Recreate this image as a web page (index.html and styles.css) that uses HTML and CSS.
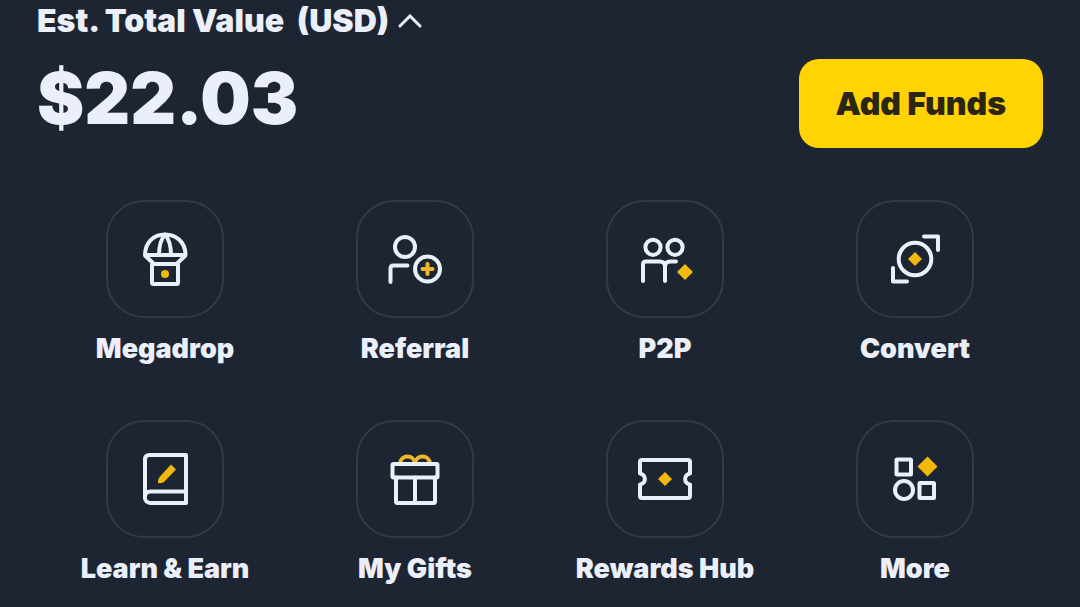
FILE: index.html
```html
<!DOCTYPE html>
<html lang="en">
<head>
  <meta charset="UTF-8" />
  <meta name="viewport" content="width=device-width, initial-scale=1.0" />
  <title>Wallet</title>
  <link rel="stylesheet" href="styles.css">
</head>
<body>
  <header class="balance">
    <div class="balance-info">
      <button class="total-toggle" type="button" aria-expanded="true">
        <span>Est. Total Value&nbsp; (USD)</span>
        <svg class="chevron" viewBox="0 0 24 14" aria-hidden="true"><path d="M2 12 12 2l10 10" /></svg>
      </button>
      <div class="amount">$22.03</div>
    </div>
    <button class="add-funds" type="button">Add Funds</button>
  </header>

  <nav class="shortcuts">
    <a class="shortcut" href="#megadrop">
      <span class="tile">
        <svg class="icon" viewBox="0 0 64 64" aria-hidden="true">
          <path d="M12 28C12 15.500 20.500 7.500 32 7.500S52.500 15.500 52.500 28Z" />
          <path d="M26 28c0-9 2-16 6-20.500 4 4.500 6 11.500 6 20.500M12.500 29l8 7.500M52 29l-8 7.500" />
          <rect x="19" y="37" width="26" height="20" rx="1.500" />
          <circle class="gold" cx="32" cy="47" r="4" />
        </svg>
      </span>
      <span class="label">Megadrop</span>
    </a>
    <a class="shortcut" href="#referral">
      <span class="tile">
        <svg class="icon" viewBox="0 0 64 64" aria-hidden="true">
          <circle cx="22" cy="20" r="10" />
          <path d="M7.500 55V41.500q0-3 3-3h14" />
          <circle cx="44.500" cy="42" r="12.500" />
          <path class="gold-line" d="M44.500 37v10M39.500 42h10" />
        </svg>
      </span>
      <span class="label">Referral</span>
    </a>
    <a class="shortcut" href="#p2p">
      <span class="tile">
        <svg class="icon" viewBox="0 0 64 64" aria-hidden="true">
          <circle cx="20" cy="20.300" r="7.600" />
          <circle cx="42" cy="20.300" r="7.600" />
          <path d="M10 54V37.500q0-3 3-3h13.500q5.500 0 5.500 5V54M32 39.500q0-5 5.500-5H43" />
          <path class="gold" d="m52 37 8 8-8 8-8-8z" />
        </svg>
      </span>
      <span class="label">P2P</span>
    </a>
    <a class="shortcut" href="#convert">
      <span class="tile">
        <svg class="icon" viewBox="0 0 64 64" aria-hidden="true">
          <circle cx="32" cy="32" r="16.300" />
          <path d="M41 9.500h14V23M10 41v13.500h14" />
          <path class="gold" d="m32 25 7 7-7 7-7-7z" />
        </svg>
      </span>
      <span class="label">Convert</span>
    </a>
    <a class="shortcut" href="#learn">
      <span class="tile">
        <svg class="icon" viewBox="0 0 64 64" aria-hidden="true">
          <path d="M12 50V12.500Q12 8 16.500 8H53v48H17.500c-7.500 0-7.500-11.500 0-11.500h35" />
          <path class="gold" d="m38 17.500 5 5-12 12.500q-2 1.500-6 1 0-4 1.500-6z" />
        </svg>
      </span>
      <span class="label">Learn &amp; Earn</span>
    </a>
    <a class="shortcut" href="#gifts">
      <span class="tile">
        <svg class="icon" viewBox="0 0 64 64" aria-hidden="true">
          <path class="gold-line" d="M17 16.500c1-9.500 14-9.500 15 0 1-9.500 14-9.500 15 0" />
          <rect x="9.500" y="17" width="45" height="13.500" rx="1" />
          <path d="M13 30.500v24q0 1.500 1.500 1.500h36q1.500 0 1.500-1.500v-24M32 30.500v25" />
        </svg>
      </span>
      <span class="label">My Gifts</span>
    </a>
    <a class="shortcut" href="#rewards">
      <span class="tile">
        <svg class="icon" viewBox="0 0 64 64" aria-hidden="true">
          <path d="M9 13h46q2 0 2 2v11.500c-6.500 1-6.500 10 0 11V49q0 2-2 2H9q-2 0-2-2V37.500c6.500-1 6.500-10 0-11V15q0-2 2-2z" />
          <path class="gold" d="m32 25 7 7-7 7-7-7z" />
        </svg>
      </span>
      <span class="label">Rewards Hub</span>
    </a>
    <a class="shortcut" href="#more">
      <span class="tile">
        <svg class="icon" viewBox="0 0 64 64" aria-hidden="true">
          <rect x="13.500" y="12.500" width="14.500" height="15" rx="0.500" />
          <path class="gold" d="m44.500 9.500 10 10-10 10-10-10z" />
          <circle cx="21" cy="43" r="9" />
          <rect x="36.500" y="36" width="14.500" height="15" rx="0.500" />
        </svg>
      </span>
      <span class="label">More</span>
    </a>
  </nav>
</body>
</html>
```

FILE: styles.css
```css
* {
  box-sizing: border-box;
}
body {
  margin: 0;
  background: #1e2532;
  color: #eaeffa;
  font-family: Inter, "Liberation Sans", sans-serif;
  font-weight: 900;
}
button {
  border: none;
  font: inherit;
  cursor: pointer;
}
.balance {
  display: flex;
  justify-content: space-between;
  align-items: flex-end;
  padding: 0 37px;
}
.total-toggle {
  display: flex;
  align-items: center;
  gap: 9px;
  padding: 0;
  background: none;
  color: inherit;
  font-size: 32px;
  line-height: 42px;
}
.chevron {
  width: 24px;
  height: 14px;
  fill: none;
  stroke: currentColor;
  stroke-width: 3;
  stroke-linecap: round;
}
.amount {
  padding-top: 6px;
  font-size: 71px;
  line-height: 100px;
}
.add-funds {
  padding: 22px 37px;
  border-radius: 20px;
  background: #ffd304;
  color: #2a2613;
  font-size: 32px;
  line-height: 45px;
}
.shortcuts {
  display: grid;
  grid-template-columns: repeat(4, 1fr);
  gap: 54px 0;
  padding: 52px 40px 0;
}
.shortcut {
  display: flex;
  flex-direction: column;
  align-items: center;
  color: inherit;
  text-decoration: none;
}
.tile {
  display: flex;
  align-items: center;
  justify-content: center;
  width: 118px;
  height: 118px;
  border: 2px solid #333947;
  border-radius: 38px;
}
.icon {
  width: 64px;
  height: 64px;
  fill: none;
  stroke: #eaeffa;
  stroke-width: 4;
  stroke-linecap: round;
  stroke-linejoin: round;
}
.icon .gold {
  fill: #f0b90b;
  stroke: none;
}
.icon .gold-line {
  stroke: #efb82c;
}
.label {
  padding-top: 14px;
  font-size: 27px;
  line-height: 34px;
}
```
